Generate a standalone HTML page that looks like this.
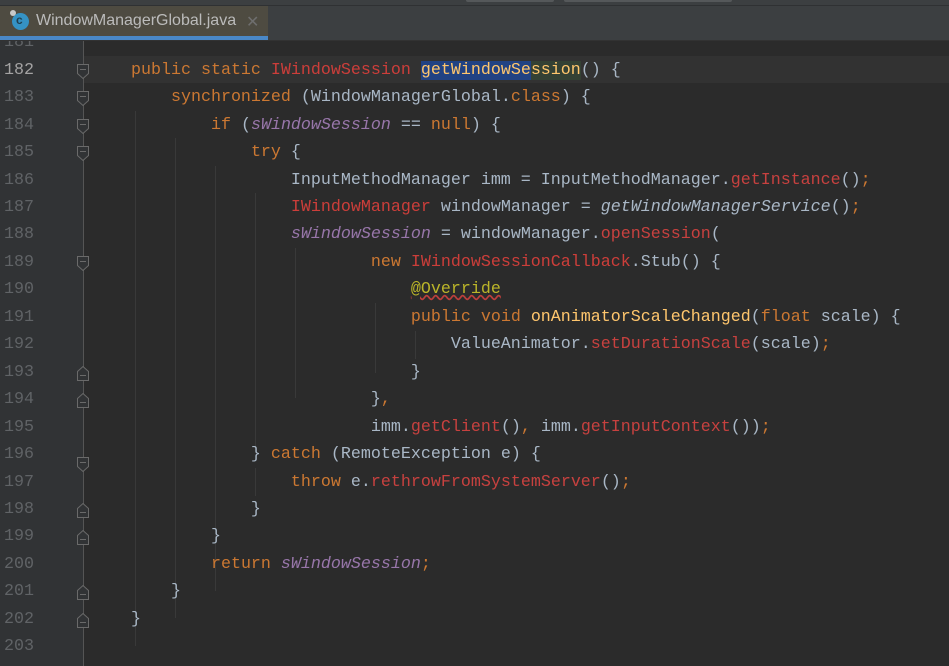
<!DOCTYPE html>
<html><head><meta charset="utf-8"><style>
html,body{margin:0;padding:0}
body{width:949px;height:666px;overflow:hidden;background:#2b2b2b;position:relative;font-family:"Liberation Sans",sans-serif}
#tabs{position:absolute;left:0;top:0;width:949px;height:41px;background:#3c3f41}
#topline{position:absolute;left:0;top:5px;width:949px;height:1px;background:#2f3133}
#btn1{position:absolute;left:466px;top:0;width:88px;height:2px;background:#55585a;border-radius:0 0 3px 3px}
#btn2{position:absolute;left:564px;top:0;width:168px;height:2px;background:#55585a;border-radius:0 0 3px 3px}
#tab{position:absolute;left:0;top:6px;width:268px;height:30px;background:#4e4b41}
#tabu{position:absolute;left:0;top:36px;width:268px;height:4px;background:#4a88c7}
#tabsep{position:absolute;left:0;top:40px;width:949px;height:1px;background:#323232}
#ticon{position:absolute;left:12px;top:13px;width:17px;height:17px;border-radius:50%;background:#3592c4}
#ticon span{position:absolute;left:4px;top:0px;font:bold 12px "Liberation Sans",sans-serif;color:#1f3f50}
#ticon i{position:absolute;left:-2px;top:-3px;width:6px;height:6px;background:#c9c9c9;border-radius:50%}
#ttext{position:absolute;left:36px;top:12px;font-size:16px;color:#bbbbbb;white-space:nowrap}
#tx{position:absolute;left:246px;top:12px;font-size:16px;color:#6e6e6e}
#gutter{position:absolute;left:0;top:41px;width:84px;height:625px;background:#313335}
#cur{position:absolute;left:84px;top:56px;width:865px;height:27px;background:#323232}
#foldline{position:absolute;left:83px;top:41px;width:1px;height:625px;background:#555}
.hl1{background:#214283}.hl2{background:#344134}
.ln{position:absolute;left:0;width:34px;text-align:right;font:16.67px "Liberation Mono",monospace;color:#606366;line-height:27.45px;height:27.45px}
.code{position:absolute;left:91px;font:16.67px "Liberation Mono",monospace;color:#a9b7c6;white-space:pre;line-height:27.45px;height:27.45px}
.k{color:#cc7832}.c{color:#cc3e3a}.m{color:#ffc66d}.r{color:#c7413f}.s{color:#9876aa;font-style:italic}.a{color:#bbb529;text-decoration:underline wavy #bc3f3c}.it{font-style:italic}
.g{position:absolute;width:1px;background:#393939}
.f{position:absolute;left:77px;width:11px;height:13px}
#clip{position:absolute;left:0;top:41px;width:949px;height:625px;overflow:hidden}
</style></head><body>
<div id="tabs"></div><div id="topline"></div><div id="btn1"></div><div id="btn2"></div>
<div id="tab"></div><div id="tabu"></div><div id="tabsep"></div>
<div id="ticon"><span>c</span><i></i></div>
<div id="ttext">WindowManagerGlobal.java</div><div id="tx">✕</div>
<div id="clip">
<div id="gutter" style="top:0"></div>
<div id="cur" style="top:15px"></div>
<div id="foldline" style="top:0"></div>
<div class="g" style="left:135px;top:70px;height:535px"></div>
<div class="g" style="left:175px;top:97px;height:480px"></div>
<div class="g" style="left:215px;top:125px;height:425px"></div>
<div class="g" style="left:255px;top:152px;height:260px"></div>
<div class="g" style="left:255px;top:427px;height:28px"></div>
<div class="g" style="left:295px;top:207px;height:150px"></div>
<div class="g" style="left:375px;top:262px;height:70px"></div>
<div class="g" style="left:415px;top:290px;height:28px"></div>
<svg style="position:absolute;left:0;top:0" width="100" height="625">
<g fill="#313335" stroke="#6a6a6a" stroke-width="1">
<path d="M77.5 23.5h11v9l-5.5 5l-5.5-5z"/><line x1="80" y1="28.5" x2="86" y2="28.5"/>
<path d="M77.5 50.5h11v9l-5.5 5l-5.5-5z"/><line x1="80" y1="55.5" x2="86" y2="55.5"/>
<path d="M77.5 78.5h11v9l-5.5 5l-5.5-5z"/><line x1="80" y1="83.5" x2="86" y2="83.5"/>
<path d="M77.5 105.5h11v9l-5.5 5l-5.5-5z"/><line x1="80" y1="110.5" x2="86" y2="110.5"/>
<path d="M77.5 215.5h11v9l-5.5 5l-5.5-5z"/><line x1="80" y1="220.5" x2="86" y2="220.5"/>
<path d="M77.5 416.5h11v9l-5.5 5l-5.5-5z"/><line x1="80" y1="421.5" x2="86" y2="421.5"/>
<path d="M77.5 339.5h11v-9l-5.5-5l-5.5 5z"/><line x1="80" y1="334.5" x2="86" y2="334.5"/>
<path d="M77.5 366.5h11v-9l-5.5-5l-5.5 5z"/><line x1="80" y1="361.5" x2="86" y2="361.5"/>
<path d="M77.5 476.5h11v-9l-5.5-5l-5.5 5z"/><line x1="80" y1="471.5" x2="86" y2="471.5"/>
<path d="M77.5 503.5h11v-9l-5.5-5l-5.5 5z"/><line x1="80" y1="498.5" x2="86" y2="498.5"/>
<path d="M77.5 558.5h11v-9l-5.5-5l-5.5 5z"/><line x1="80" y1="553.5" x2="86" y2="553.5"/>
<path d="M77.5 586.5h11v-9l-5.5-5l-5.5 5z"/><line x1="80" y1="581.5" x2="86" y2="581.5"/>
</g></svg>
<div style="position:absolute;left:0;top:-11.7px;width:949px">
<div class="ln" style="top:0px">181</div>
<div class="ln" style="top:27.45px;color:#a4a3a3">182</div>
<div class="ln" style="top:54.9px">183</div>
<div class="ln" style="top:82.35px">184</div>
<div class="ln" style="top:109.8px">185</div>
<div class="ln" style="top:137.25px">186</div>
<div class="ln" style="top:164.7px">187</div>
<div class="ln" style="top:192.15px">188</div>
<div class="ln" style="top:219.6px">189</div>
<div class="ln" style="top:247.05px">190</div>
<div class="ln" style="top:274.5px">191</div>
<div class="ln" style="top:301.95px">192</div>
<div class="ln" style="top:329.4px">193</div>
<div class="ln" style="top:356.85px">194</div>
<div class="ln" style="top:384.3px">195</div>
<div class="ln" style="top:411.75px">196</div>
<div class="ln" style="top:439.2px">197</div>
<div class="ln" style="top:466.65px">198</div>
<div class="ln" style="top:494.1px">199</div>
<div class="ln" style="top:521.55px">200</div>
<div class="ln" style="top:549px">201</div>
<div class="ln" style="top:576.45px">202</div>
<div class="ln" style="top:603.9px">203</div>

<div class="code" style="top:27.45px">    <span class="k">public static </span><span class="c">IWindowSession</span> <span class="m"><span class="hl1">getWindowSe</span><span class="hl2">ssion</span></span>() {</div>
<div class="code" style="top:54.9px">        <span class="k">synchronized</span> (WindowManagerGlobal.<span class="k">class</span>) {</div>
<div class="code" style="top:82.35px">            <span class="k">if</span> (<span class="s">sWindowSession</span> == <span class="k">null</span>) {</div>
<div class="code" style="top:109.8px">                <span class="k">try</span> {</div>
<div class="code" style="top:137.25px">                    InputMethodManager imm = InputMethodManager.<span class="r">getInstance</span>()<span class="k">;</span></div>
<div class="code" style="top:164.7px">                    <span class="c">IWindowManager</span> windowManager = <span class="it">getWindowManagerService</span>()<span class="k">;</span></div>
<div class="code" style="top:192.15px">                    <span class="s">sWindowSession</span> = windowManager.<span class="r">openSession</span>(</div>
<div class="code" style="top:219.6px">                            <span class="k">new </span><span class="c">IWindowSessionCallback</span>.Stub() {</div>
<div class="code" style="top:247.05px">                                <span class="a">@Override</span></div>
<div class="code" style="top:274.5px">                                <span class="k">public void </span><span class="m">onAnimatorScaleChanged</span>(<span class="k">float </span>scale) {</div>
<div class="code" style="top:301.95px">                                    ValueAnimator.<span class="r">setDurationScale</span>(scale)<span class="k">;</span></div>
<div class="code" style="top:329.4px">                                }</div>
<div class="code" style="top:356.85px">                            }<span class="k">,</span></div>
<div class="code" style="top:384.3px">                            imm.<span class="r">getClient</span>()<span class="k">, </span>imm.<span class="r">getInputContext</span>())<span class="k">;</span></div>
<div class="code" style="top:411.75px">                } <span class="k">catch </span>(RemoteException e) {</div>
<div class="code" style="top:439.2px">                    <span class="k">throw </span>e.<span class="r">rethrowFromSystemServer</span>()<span class="k">;</span></div>
<div class="code" style="top:466.65px">                }</div>
<div class="code" style="top:494.1px">            }</div>
<div class="code" style="top:521.55px">            <span class="k">return </span><span class="s">sWindowSession</span><span class="k">;</span></div>
<div class="code" style="top:549px">        }</div>
<div class="code" style="top:576.45px">    }</div>
</div>
</div>
</body></html>
